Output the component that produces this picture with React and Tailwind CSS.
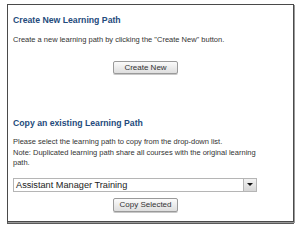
export default function App() {
  return (
    <div className="w-[300px] h-[229px] bg-white overflow-hidden pt-[4px] pl-[7px] font-['Liberation_Sans',Arial,sans-serif]">
      <div className="w-[287px] h-[218px] border border-[#4a4a4a] shadow-[1px_1px_0_#9a9a9a,0_2px_0_#5a5a5a] flex flex-col pl-[5px] pr-[24px] pt-[9px]">
        <h2 className="text-[8.7px] leading-[12px] font-bold text-[#244b7c]">
          Create New Learning Path
        </h2>
        <p className="mt-[9px] text-[7.5px] leading-[10px] text-[#333]">
          Create a new learning path by clicking the "Create New" button.
        </p>
        <button className="mt-[16px] ml-[100px] w-[65px] h-[13px] self-start rounded-[2px] border border-[#9a9a9a] bg-gradient-to-b from-[#fbfbfb] to-[#dedede] shadow-[0_1px_0_#c8c8c8] text-[8px] leading-[11px] text-[#333]">
          Create New
        </button>

        <h2 className="mt-[43px] text-[8.7px] leading-[12px] font-bold text-[#244b7c]">
          Copy an existing Learning Path
        </h2>
        <p className="mt-[8px] text-[7.5px] leading-[10.5px] text-[#333]">
          Please select the learning path to copy from the drop-down list.
          <br />
          Note: Duplicated learning path share all courses with the original learning path.
        </p>
        <div className="mt-[9px] w-[244px] h-[14px] shrink-0 flex border border-[#b5b5b5] bg-white">
          <div className="flex-1 pl-[2px] text-[9.2px] leading-[12px] text-[#222]">
            Assistant Manager Training
          </div>
          <div className="w-[13px] h-full border-l border-[#b5b5b5] bg-gradient-to-b from-[#f2f2f2] to-[#d6d6d6] flex items-center justify-center">
            <div className="w-0 h-0 border-l-[3px] border-r-[3px] border-t-[3px] border-l-transparent border-r-transparent border-t-[#111]" />
          </div>
        </div>
        <button className="mt-[6px] ml-[100px] w-[65px] h-[14px] shrink-0 self-start rounded-[2px] border border-[#9a9a9a] bg-gradient-to-b from-[#fbfbfb] to-[#dedede] shadow-[0_1px_0_#c8c8c8] text-[8px] leading-[12px] text-[#333]">
          Copy Selected
        </button>
      </div>
    </div>
  );
}
